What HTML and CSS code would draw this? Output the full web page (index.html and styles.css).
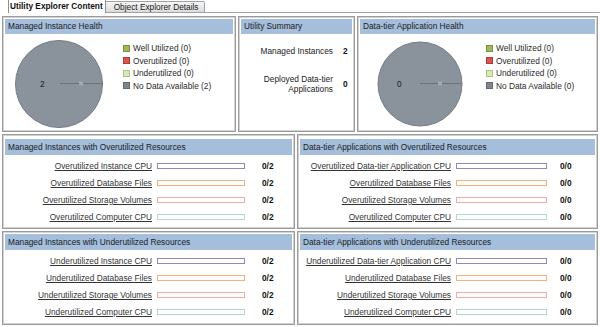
FILE: index.html
```html
<!DOCTYPE html>
<html>
<head>
<meta charset="utf-8">
<link rel="stylesheet" href="styles.css">
</head>
<body>
<div class="tabs">
  <div class="tab tab-active">Utility Explorer Content</div>
  <div class="tab tab-inactive">Object Explorer Details</div>
  <div class="tab-fill"></div>
</div>
<div class="content">
  <div class="row row-top">
    <section class="panel panel-health panel-health-left">
      <div class="panel-header">Managed Instance Health</div>
      <div class="health-body">
        <svg class="pie" width="90" height="90" viewBox="0 0 90 90">
          <circle cx="45" cy="45" r="43.5" fill="#8a929c" stroke="#747c86" stroke-width="1"/>
          <line x1="46" y1="44.5" x2="88.5" y2="44.5" stroke="#6b737d" stroke-width="1"/>
          <rect x="65" y="42.5" width="4" height="4" fill="#a3aab2"/>
          <text x="26" y="48" class="pie-label">2</text>
        </svg>
        <ul class="legend">
          <li><span class="swatch sw-well"></span>Well Utilized (0)</li>
          <li><span class="swatch sw-over"></span>Overutilized (0)</li>
          <li><span class="swatch sw-under"></span>Underutilized (0)</li>
          <li><span class="swatch sw-nodata"></span>No Data Available (2)</li>
        </ul>
      </div>
    </section>
    <section class="panel panel-summary">
      <div class="panel-header">Utility Summary</div>
      <div class="summary-grid">
        <div class="summary-label">Managed Instances</div>
        <div class="summary-value">2</div>
        <div class="summary-label">Deployed Data-tier<br>Applications</div>
        <div class="summary-value">0</div>
      </div>
    </section>
    <section class="panel panel-health panel-health-right">
      <div class="panel-header">Data-tier Application Health</div>
      <div class="health-body">
        <svg class="pie" width="90" height="90" viewBox="0 0 90 90">
          <circle cx="45" cy="45" r="42" fill="#8a929c" stroke="#747c86" stroke-width="1"/>
          <line x1="45" y1="44.5" x2="86.5" y2="44.5" stroke="#6b737d" stroke-width="1"/>
          <rect x="63" y="42.5" width="4" height="4" fill="#a3aab2"/>
          <text x="22" y="48" class="pie-label">0</text>
        </svg>
        <ul class="legend">
          <li><span class="swatch sw-well"></span>Well Utilized (0)</li>
          <li><span class="swatch sw-over"></span>Overutilized (0)</li>
          <li><span class="swatch sw-under"></span>Underutilized (0)</li>
          <li><span class="swatch sw-nodata"></span>No Data Available (0)</li>
        </ul>
      </div>
    </section>
  </div>

  <div class="row row-mid">
    <section class="panel panel-res panel-res-left">
      <div class="panel-header">Managed Instances with Overutilized Resources</div>
      <div class="res-grid">
        <a class="res-label">Overutilized Instance CPU</a><span class="bar bar-cpu"></span><b class="res-value">0/2</b>
        <a class="res-label">Overutilized Database Files</a><span class="bar bar-files"></span><b class="res-value">0/2</b>
        <a class="res-label">Overutilized Storage Volumes</a><span class="bar bar-vol"></span><b class="res-value">0/2</b>
        <a class="res-label">Overutilized Computer CPU</a><span class="bar bar-comp"></span><b class="res-value">0/2</b>
      </div>
    </section>
    <section class="panel panel-res panel-res-right">
      <div class="panel-header">Data-tier Applications with Overutilized Resources</div>
      <div class="res-grid">
        <a class="res-label">Overutilized Data-tier Application CPU</a><span class="bar bar-cpu"></span><b class="res-value">0/0</b>
        <a class="res-label">Overutilized Database Files</a><span class="bar bar-files"></span><b class="res-value">0/0</b>
        <a class="res-label">Overutilized Storage Volumes</a><span class="bar bar-vol"></span><b class="res-value">0/0</b>
        <a class="res-label">Overutilized Computer CPU</a><span class="bar bar-comp"></span><b class="res-value">0/0</b>
      </div>
    </section>
  </div>

  <div class="row row-bottom">
    <section class="panel panel-res panel-res-left">
      <div class="panel-header">Managed Instances with Underutilized Resources</div>
      <div class="res-grid">
        <a class="res-label">Underutilized Instance CPU</a><span class="bar bar-cpu"></span><b class="res-value">0/2</b>
        <a class="res-label">Underutilized Database Files</a><span class="bar bar-files"></span><b class="res-value">0/2</b>
        <a class="res-label">Underutilized Storage Volumes</a><span class="bar bar-vol"></span><b class="res-value">0/2</b>
        <a class="res-label">Underutilized Computer CPU</a><span class="bar bar-comp"></span><b class="res-value">0/2</b>
      </div>
    </section>
    <section class="panel panel-res panel-res-right">
      <div class="panel-header">Data-tier Applications with Underutilized Resources</div>
      <div class="res-grid">
        <a class="res-label">Underutilized Data-tier Application CPU</a><span class="bar bar-cpu"></span><b class="res-value">0/0</b>
        <a class="res-label">Underutilized Database Files</a><span class="bar bar-files"></span><b class="res-value">0/0</b>
        <a class="res-label">Underutilized Storage Volumes</a><span class="bar bar-vol"></span><b class="res-value">0/0</b>
        <a class="res-label">Underutilized Computer CPU</a><span class="bar bar-comp"></span><b class="res-value">0/0</b>
      </div>
    </section>
  </div>
</div>
</body>
</html>
```

FILE: styles.css
```css
* { box-sizing: border-box; }

html, body {
  margin: 0;
  padding: 0;
}

body {
  width: 600px;
  height: 327px;
  overflow: hidden;
  background: #ffffff;
  font-family: "Liberation Sans", Arial, sans-serif;
  font-size: 8.3px;
  color: #222222;
}

/* Tabs */
.tabs {
  display: flex;
  align-items: flex-end;
  height: 13px;
}

.tab {
  white-space: nowrap;
}

.tab-active {
  margin-left: 8px;
  height: 13px;
  line-height: 12px;
  padding: 0 2px 0 1px;
  border-left: 1px solid #8e8e8e;
  border-right: 1px solid #8e8e8e;
  background: #ffffff;
  font-weight: bold;
  color: #111111;
}

.tab-inactive {
  height: 12px;
  line-height: 10px;
  padding: 0 5px 0 8px;
  border: 1px solid #a2a2a2;
  border-left: none;
  border-radius: 0 2px 0 0;
  background: linear-gradient(#f6f6f6, #dcdcdc);
  color: #222222;
}

.tab-fill {
  flex: 1;
  height: 13px;
  border-bottom: 1px solid #a2a2a2;
}

/* Layout */
.content {
  padding: 3px 2px 0 2px;
  display: flex;
  flex-direction: column;
  gap: 2px;
}

.row {
  display: flex;
  gap: 2px;
}

.row-top { height: 116px; }
.row-mid { height: 95px; }
.row-bottom { height: 94px; }

.panel {
  border: 1px solid #9a9a9a;
  box-shadow: inset 0 0 0 1px #d2d2d2;
  padding: 2px;
  background: #ffffff;
}

.panel-header {
  height: 15px;
  line-height: 15px;
  padding-left: 3px;
  background: #a4bedb;
  color: #1b1b1b;
  white-space: nowrap;
  overflow: hidden;
}

/* Health panels */
.panel-health-left { width: 234px; }
.panel-summary { width: 117px; }
.panel-health-right { width: 241px; }

.health-body {
  display: flex;
  align-items: flex-start;
}

.pie {
  display: block;
  margin-top: 5px;
  flex: none;
}

.panel-health-left .pie { margin-left: 9px; }
.panel-health-right .pie { margin-left: 15px; }

.pie-label {
  font-family: "Liberation Sans", Arial, sans-serif;
  font-size: 8.3px;
  fill: #1a1a1a;
}

.legend {
  list-style: none;
  margin: 8px 0 0 0;
  padding: 0;
}

.panel-health-left .legend { margin-left: 19px; }
.panel-health-right .legend { margin-left: 21px; }

.legend li {
  display: flex;
  align-items: center;
  height: 12.5px;
  white-space: nowrap;
  color: #2a2a2a;
}

.swatch {
  width: 7px;
  height: 7px;
  margin-right: 3px;
  border: 1px solid;
  flex: none;
}

.sw-well { background: #9bbb59; border-color: #77933c; }
.sw-over { background: #d9534f; border-color: #b03a37; }
.sw-under { background: #d7e8b9; border-color: #a9c57e; }
.sw-nodata { background: #7e868f; border-color: #626971; }

/* Summary */
.summary-grid {
  display: grid;
  grid-template-columns: 92px auto;
  column-gap: 10px;
  row-gap: 18px;
  align-items: center;
  margin-top: 12px;
  line-height: 10px;
}

.summary-label {
  text-align: right;
  color: #222222;
}

.summary-value {
  font-weight: bold;
  color: #111111;
}

/* Resource panels */
.panel-res-left { width: 293px; }
.panel-res-right { width: 301px; }

.row-mid .panel { padding-top: 4px; }
.row-mid .panel-header,
.row-bottom .panel-header { height: 16px; line-height: 16px; }

.res-grid {
  display: grid;
  grid-auto-rows: 17px;
  align-items: center;
  margin-top: 2px;
}

.panel-res-left .res-grid { grid-template-columns: 147px 88px auto; column-gap: 5px; }
.panel-res-left .res-value { margin-left: 12px; }
.panel-res-right .res-grid { grid-template-columns: 151px 91px auto; column-gap: 5px; }
.panel-res-right .res-value { margin-left: 8px; }

.res-label {
  text-align: right;
  color: #333333;
  text-decoration: underline;
  white-space: nowrap;
}

.bar {
  display: block;
  height: 6px;
  border: 1px solid;
  background: #ffffff;
}

.bar-cpu { border-color: #8d8db3; }
.bar-files { border-color: #f4b07a; }
.bar-vol { border-color: #f5a9aa; }
.bar-comp { border-color: #b7d6cf; }

.res-value {
  font-weight: bold;
  color: #111111;
}
```
